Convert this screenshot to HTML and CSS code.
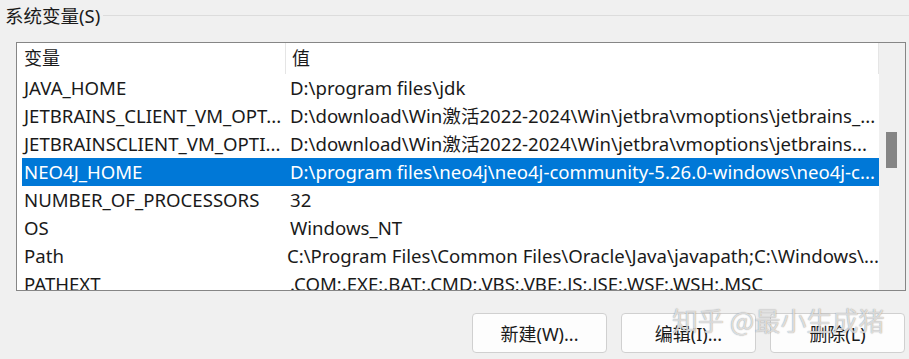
FILE: index.html
```html
<!DOCTYPE html>
<html lang="zh-CN">
<head>
    <meta charset="UTF-8">
    <title>系统变量</title>
    <link rel="stylesheet" href="styles.css">
</head>
<body>
    <div class="group">
        <div class="group-title">
            <span>系统变量(S)</span>
            <div class="group-line"></div>
        </div>

        <div class="listbox">
            <div class="list">
                <div class="row head">
                    <div class="col name">变量</div>
                    <div class="col value">值</div>
                </div>
                <div class="row">
                    <div class="col name">JAVA_HOME</div>
                    <div class="col value">D:\program files\jdk</div>
                </div>
                <div class="row">
                    <div class="col name">JETBRAINS_CLIENT_VM_OPT...</div>
                    <div class="col value">D:\download\Win激活2022-2024\Win\jetbra\vmoptions\jetbrains_...</div>
                </div>
                <div class="row">
                    <div class="col name">JETBRAINSCLIENT_VM_OPTI...</div>
                    <div class="col value">D:\download\Win激活2022-2024\Win\jetbra\vmoptions\jetbrains...</div>
                </div>
                <div class="row selected">
                    <div class="col name">NEO4J_HOME</div>
                    <div class="col value">D:\program files\neo4j\neo4j-community-5.26.0-windows\neo4j-c...</div>
                </div>
                <div class="row">
                    <div class="col name">NUMBER_OF_PROCESSORS</div>
                    <div class="col value">32</div>
                </div>
                <div class="row">
                    <div class="col name">OS</div>
                    <div class="col value">Windows_NT</div>
                </div>
                <div class="row">
                    <div class="col name">Path</div>
                    <div class="col value">C:\Program Files\Common Files\Oracle\Java\javapath;C:\Windows\...</div>
                </div>
                <div class="row">
                    <div class="col name">PATHEXT</div>
                    <div class="col value">.COM;.EXE;.BAT;.CMD;.VBS;.VBE;.JS;.JSE;.WSF;.WSH;.MSC</div>
                </div>
            </div>
            <div class="scrollbar">
                <div class="thumb"></div>
            </div>
        </div>

        <div class="buttons">
            <button>新建(W)...</button>
            <button>编辑(I)...</button>
            <button>删除(L)</button>
        </div>
    </div>

    <div class="watermark">知乎 @最小生成猪</div>
</body>
</html>
```

FILE: styles.css
```css
body {
    margin: 0;
    background-color: #f0f0f0;
    font-family: "Noto Sans", "Noto Sans CJK SC", sans-serif;
    color: #1a1a1a;
    width: 909px;
    height: 359px;
    overflow: hidden;
    position: relative;
}

.group-title {
    display: flex;
    align-items: center;
    height: 30px;
    padding-left: 5px;
    font-size: 18.5px;
}

.group-line {
    flex: 1;
    height: 1px;
    margin-left: 3px;
    background-color: #dcdcdc;
}

.listbox {
    display: flex;
    margin: 12px 0 0 16px;
    width: 888px;
    height: 247px;
    border: 1px solid #868686;
    background-color: #fff;
}

.list {
    flex: 1;
    overflow: hidden;
}

.row {
    display: flex;
    height: 28px;
    margin-left: 5px;
    font-size: 18.6px;
    line-height: 28px;
    white-space: nowrap;
}

.row.head {
    height: 31px;
    line-height: 31px;
    margin-left: 0;
    padding-left: 5px;
    border-right: 1px solid #e5e5e5;
    font-size: 18px;
}

.col.name {
    width: 261px;
    padding-left: 2px;
    overflow: hidden;
}

.col.value {
    padding-left: 5px;
}

.head .col.name {
    border-right: 1px solid #e5e5e5;
}

.head .col.value {
    padding-left: 6px;
}

.row.selected {
    background-color: #0078d7;
    color: #fff;
}

.scrollbar {
    width: 26px;
    background-color: #f0f0f0;
    position: relative;
}

.thumb {
    position: absolute;
    left: 7px;
    top: 89px;
    width: 11px;
    height: 36px;
    background-color: #858585;
}

.buttons {
    display: flex;
    justify-content: flex-end;
    gap: 14px;
    margin-top: 22px;
    padding-right: 4px;
}

button {
    width: 135px;
    height: 40px;
    background-color: #fdfdfd;
    border: 1px solid #d0d0d0;
    border-radius: 4px;
    font-family: "Noto Sans", "Noto Sans CJK SC", sans-serif;
    font-size: 18px;
    color: #1a1a1a;
}

.watermark {
    position: absolute;
    left: 672px;
    top: 301px;
    font-family: "Noto Sans CJK SC", sans-serif;
    font-size: 26px;
    color: rgba(255, 255, 255, 0.7);
    text-shadow: 0 0 1px rgba(80, 80, 80, 0.7);
}
```
